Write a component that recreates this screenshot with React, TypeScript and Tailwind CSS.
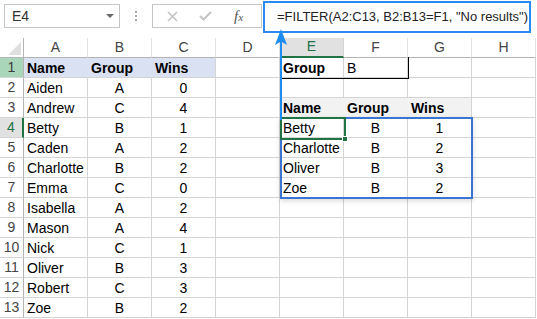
import React from "react";

type Cell = { text?: string; bold?: boolean; align?: "left" | "center"; bg?: string; noRight?: boolean };

const leftData: string[][] = [
  ["Name", "Group", "Wins"],
  ["Aiden", "A", "0"],
  ["Andrew", "C", "4"],
  ["Betty", "B", "1"],
  ["Caden", "A", "2"],
  ["Charlotte", "B", "2"],
  ["Emma", "C", "0"],
  ["Isabella", "A", "2"],
  ["Mason", "A", "4"],
  ["Nick", "C", "1"],
  ["Oliver", "B", "3"],
  ["Robert", "C", "3"],
  ["Zoe", "B", "2"],
];

const rightData: Record<number, string[]> = {
  4: ["Betty", "B", "1"],
  5: ["Charlotte", "B", "2"],
  6: ["Oliver", "B", "3"],
  7: ["Zoe", "B", "2"],
};

const cols = ["A", "B", "C", "D", "E", "F", "G", "H"];

const buildRow = (r: number): Cell[] => {
  const row: Cell[] = [];
  const l = leftData[r - 1];
  if (r === 1) {
    l.forEach((t) => row.push({ text: t, bold: true, align: "left", bg: "bg-[#d9e1f2]", noRight: t !== "Wins" }));
  } else {
    row.push({ text: l[0], align: "left" });
    row.push({ text: l[1], align: "center" });
    row.push({ text: l[2], align: "center" });
  }
  // D
  row.push({});
  // E F G
  if (r === 1) {
    row.push({ text: "Group", bold: true, align: "left" });
    row.push({ text: "B", align: "left" });
    row.push({});
  } else if (r === 3) {
    row.push({ text: "Name", bold: true, align: "left", bg: "bg-[#f2f2f2]", noRight: true });
    row.push({ text: "Group", bold: true, align: "left", bg: "bg-[#f2f2f2]", noRight: true });
    row.push({ text: "Wins", bold: true, align: "left", bg: "bg-[#f2f2f2]" });
  } else if (rightData[r]) {
    const d = rightData[r];
    row.push({ text: d[0], align: "left" });
    row.push({ text: d[1], align: "center" });
    row.push({ text: d[2], align: "center" });
  } else {
    row.push({});
    row.push({});
    row.push({});
  }
  // H
  row.push({});
  return row;
};

const App = () => {
  const rows = Array.from({ length: 13 }, (_, i) => i + 1);

  return (
    <div className="relative w-[537px] h-[319px] overflow-hidden bg-white font-['Liberation_Sans',Arial,sans-serif] text-black">
      {/*Formula bar*/}
      <div className="flex h-[38px] pl-1 pt-1">
        <div className="flex w-[116px] h-6 items-center justify-between border border-[#c6c6c6] pl-[7px] pr-[5px]">
          <span className="text-[14px] text-[#333]">E4</span>
          <span className="w-0 h-0 border-l-[4px] border-r-[4px] border-t-[4px] border-l-transparent border-r-transparent border-t-[#6b6b6b]" />
        </div>
        <div className="flex w-8 h-6 flex-col items-center justify-center gap-[2px]">
          <span className="w-[2px] h-[2px] bg-[#a6a6a6]" />
          <span className="w-[2px] h-[2px] bg-[#a6a6a6]" />
          <span className="w-[2px] h-[2px] bg-[#a6a6a6]" />
        </div>
        <div className="flex w-[110px] h-6 items-center border border-[#c6c6c6]">
          <svg className="ml-[14px]" width="11" height="11" viewBox="0 0 11 11">
            <path d="M1 1 L10 10 M10 1 L1 10" stroke="#c4c4c4" strokeWidth="1.6" fill="none" />
          </svg>
          <svg className="ml-[21px]" width="13" height="10" viewBox="0 0 13 10">
            <path d="M1 5 L4.5 8.5 L12 1" stroke="#c4c4c4" strokeWidth="2" fill="none" />
          </svg>
          <span className="ml-[22px] font-['Liberation_Serif',serif] italic text-[15px] text-[#555] leading-none">
            f<span className="text-[11px]">x</span>
          </span>
        </div>
        <div className="-mt-[3px] ml-px flex w-[268px] h-8 items-center border-2 border-[#2a8af2] pl-3">
          <span className="text-[13px] text-[#222] whitespace-nowrap">=FILTER(A2:C13, B2:B13=F1, "No results")</span>
        </div>
      </div>

      {/*Grid*/}
      <div className="grid grid-cols-[24px_repeat(8,64px)]">
        {/*column headers*/}
        <div className="relative h-5 border-r border-b border-[#b4b4b4]">
          <svg className="absolute right-[2px] bottom-[2px]" width="13" height="13" viewBox="0 0 13 13">
            <path d="M13 0 L13 13 L0 13 Z" fill="#dfdfdf" />
          </svg>
        </div>
        {cols.map((c) => (
          <div
            key={c}
            className={
              c === "E"
                ? "flex h-5 items-end justify-center bg-[#e1e1e1] border-b-2 border-b-[#217346] border-r border-r-[#d4d4d4] text-[14px] leading-5 text-[#217346]"
                : "flex h-5 items-end justify-center border-b border-b-[#b4b4b4] border-r border-r-[#e1e1e1] text-[14px] leading-5 text-[#444]"
            }
          >
            {c}
          </div>
        ))}

        {rows.map((r) => (
          <React.Fragment key={r}>
            <div
              className={
                r === 1
                  ? "flex h-5 items-center justify-center bg-[#a9d6b8] border-r border-r-[#b4b4b4] border-b border-b-[#d4d4d4] text-[14px] text-[#3b3b3b]"
                  : r === 4
                  ? "flex h-5 items-center justify-center bg-[#e1e1e1] border-r-2 border-r-[#217346] border-b border-b-[#d4d4d4] text-[14px] text-[#217346]"
                  : "flex h-5 items-center justify-center border-r border-r-[#b4b4b4] border-b border-b-[#d4d4d4] text-[14px] text-[#444]"
              }
            >
              {r}
            </div>
            {buildRow(r).map((cell, i) => (
              <div
                key={i}
                className={[
                  "h-5 px-[3px] border-b border-b-[#d4d4d4] border-r text-[14px] leading-5 whitespace-nowrap",
                  cell.noRight ? "border-r-transparent" : "border-r-[#d4d4d4]",
                  cell.bg || "",
                  cell.bold ? "font-bold" : "",
                  cell.align === "center" ? "text-center" : "text-left",
                ].join(" ")}
              >
                {cell.text}
              </div>
            ))}
          </React.Fragment>
        ))}
      </div>

      {/*E1:F1 border*/}
      <div className="absolute left-[280px] top-[57px] w-[129px] h-[22px] border-b border-r border-l border-black" />

      {/*spill range*/}
      <div className="absolute left-[280px] top-[117px] w-[193px] h-[82px] border-2 border-[#3c74d1] shadow-[0_2px_5px_rgba(0,0,0,0.15)]" />

      {/*active cell E4*/}
      <div className="absolute left-[280px] top-[117px] w-[66px] h-[23px] border-2 border-[#217346]">
        <span className="absolute -right-[4px] -bottom-[4px] w-[6px] h-[6px] bg-[#217346] border border-white" />
      </div>

      {/*arrow*/}
      <svg className="absolute left-[272px] top-[28px]" width="18" height="92" viewBox="0 0 18 92">
        <rect x="8" y="12" width="2" height="80" fill="#1e8cf0" />
        <path d="M9 1 L15 17 L9 13.5 L3 17 Z" fill="#1e8cf0" />
      </svg>
    </div>
  );
};

export default App;
